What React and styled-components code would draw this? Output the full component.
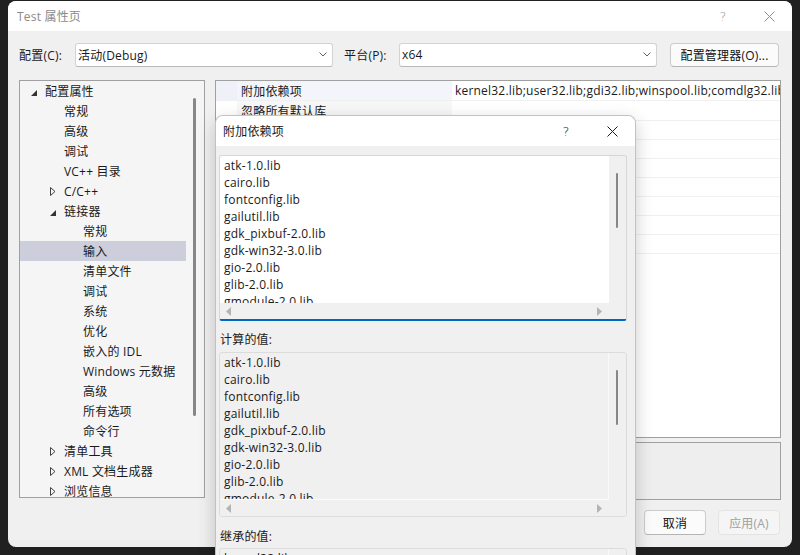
import React from "react";
import styled, { createGlobalStyle } from "styled-components";

const GlobalStyle = createGlobalStyle`
  html, body { margin: 0; padding: 0; background: #202020; }
  body {
    font-family: "Open Sans", "Noto Sans CJK SC", sans-serif;
    font-size: 12px;
    letter-spacing: 0.2px;
    color: #1a1a1a;
  }
  * { box-sizing: border-box; }
`;

const Desktop = styled.div`
  position: relative;
  width: 800px;
  height: 555px;
  overflow: hidden;
  padding: 1px 8px 0 8px;
`;

const Window = styled.div`
  width: 784px;
  height: 546px;
  background: #f0f0f0;
  border-radius: 8px;
  overflow: hidden;
  display: flex;
  flex-direction: column;
`;

const TitleBar = styled.div`
  flex: none;
  height: ${(p) => p.$h || 30}px;
  background: #ffffff;
  display: flex;
  align-items: center;
  padding-left: ${(p) => p.$pad || 9}px;
`;

const TitleText = styled.div`
  flex: 1;
  font-size: 12px;
  color: ${(p) => (p.$inactive ? "#8a8a8a" : "#1a1a1a")};
`;

const CaptionButton = styled.div`
  width: 46px;
  height: 100%;
  display: flex;
  align-items: center;
  justify-content: center;
  color: ${(p) => (p.$inactive ? "#9a9a9a" : "#1a1a1a")};
  font-size: 13px;
  font-family: "DejaVu Sans", sans-serif;
  font-weight: 300;
`;

const Body = styled.div`
  flex: 1;
  display: flex;
  flex-direction: column;
  padding: 11px 11px 12px 11px;
`;

const Toolbar = styled.div`
  display: flex;
  align-items: center;
  height: 25px;
`;

const FieldLabel = styled.div`
  width: ${(p) => p.$w}px;
  margin-left: ${(p) => p.$ml || 0}px;
  white-space: nowrap;
`;

const Combo = styled.div`
  width: 258px;
  height: 24px;
  background: #ffffff;
  border: 1px solid #d3d3d3;
  border-bottom-color: #b8b8b8;
  border-radius: 3px;
  display: flex;
  align-items: center;
  padding: 0 5px 0 2px;
`;

const ComboText = styled.div`
  flex: 1;
`;

const PushButton = styled.div`
  width: ${(p) => p.$w || 62}px;
  height: ${(p) => p.$h || 25}px;
  margin-left: ${(p) => (p.$auto ? "auto" : "0")};
  margin-right: ${(p) => p.$mr || 0}px;
  border: 1px solid ${(p) => (p.$disabled ? "#e3e3e3" : "#cccccc")};
  border-bottom-color: ${(p) => (p.$disabled ? "#e3e3e3" : "#b5b5b5")};
  border-radius: 4px;
  background: ${(p) => (p.$disabled ? "#f5f5f5" : "#fbfbfb")};
  color: ${(p) => (p.$disabled ? "#a0a0a0" : "#111")};
  display: flex;
  align-items: center;
  justify-content: center;
  white-space: nowrap;
`;

const MainArea = styled.div`
  display: grid;
  grid-template-columns: 186px minmax(0, 1fr);
  column-gap: 10px;
  margin-top: 13px;
  height: 420px;
`;

const Tree = styled.div`
  height: 418px;
  border: 1px solid #a0a0a0;
  background: #f5f5f5;
  display: flex;
`;

const TreeList = styled.div`
  flex: 1;
  overflow: hidden;
`;

const TreeRow = styled.div`
  height: 20px;
  display: flex;
  align-items: center;
  padding-left: ${(p) => 11 + p.$level * 19}px;
  background: ${(p) => (p.$selected ? "#cccedb" : "transparent")};
  white-space: nowrap;
`;

const Toggle = styled.div`
  width: 14px;
  flex: none;
  display: flex;
  align-items: center;
  margin-top: ${(p) => (p.$open ? 4 : 0)}px;
`;

const TreeScroll = styled.div`
  width: 18px;
  flex: none;
  padding: 17px 0 0 7px;
`;

const Thumb = styled.div`
  width: ${(p) => p.$w || 3}px;
  height: ${(p) => p.$h}px;
  background: #878787;
  border-radius: 2px;
`;

const RightColumn = styled.div`
  min-width: 0;
  display: flex;
  flex-direction: column;
  gap: 4px;
`;

const PropGrid = styled.div`
  height: 358px;
  border: 1px solid #a0a0a0;
  background: #ffffff;
  overflow: hidden;
`;

const PropRow = styled.div`
  display: grid;
  grid-template-columns: 21px 215px minmax(0, 1fr);
  height: 19px;
  border-bottom: 1px solid #f0f0f0;
  &:nth-child(-n + 2) {
    height: 20px;
  }
`;

const PropMargin = styled.div`
  background: ${(p) => (p.$active ? "#eef2f8" : "#ffffff")};
`;

const PropName = styled.div`
  padding-left: 4px;
  display: flex;
  align-items: center;
  background: ${(p) => (p.$active ? "#f2f5fa" : "#f7f7f7")};
  white-space: nowrap;
  overflow: hidden;
`;

const PropValue = styled.div`
  padding-left: 3px;
  display: flex;
  align-items: center;
  white-space: nowrap;
  overflow: hidden;
`;

const Description = styled.div`
  height: 58px;
  border: 1px solid #a0a0a0;
  background: #eeeeee;
`;

const Footer = styled.div`
  display: flex;
  justify-content: flex-end;
  gap: 12px;
  margin-top: 10px;
  padding-right: 1px;
`;

/* Child dialog floating over the property page */
const Dialog = styled.div`
  position: absolute;
  left: 215px;
  top: 115px;
  width: 421px;
  height: 460px;
  background: #f0f0f0;
  border: 1px solid #c2c2c2;
  border-bottom: none;
  border-radius: 8px 8px 0 0;
  box-shadow: 0 6px 18px rgba(0, 0, 0, 0.2);
  overflow: hidden;
  display: flex;
  flex-direction: column;
`;

const DialogBody = styled.div`
  padding: 9px 8px 0 3px;
  display: flex;
  flex-direction: column;
`;

const SectionLabel = styled.div`
  line-height: 17px;
  margin: ${(p) => p.$mt}px 0 ${(p) => p.$mb}px 1px;
`;

const EditBox = styled.div`
  flex: none;
  height: ${(p) => p.$h}px;
  background: ${(p) => (p.$readOnly ? "#f0f0f0" : "#ffffff")};
  border: 1px solid ${(p) => (p.$readOnly ? "#dcdcdc" : "#d6d6d6")};
  border-bottom: ${(p) => (p.$focused ? "2px solid #0067c0" : "1px solid #dcdcdc")};
  border-radius: 3px;
  display: grid;
  grid-template-columns: minmax(0, 1fr) 17px;
  grid-template-rows: minmax(0, 1fr) 16px;
  overflow: hidden;
`;

const EditText = styled.div`
  padding: 1px 4px;
  line-height: 17px;
  overflow: hidden;
  white-space: nowrap;
  border-right: ${(p) => (p.$readOnly ? "1px solid #fafafa" : "none")};
  border-bottom: ${(p) => (p.$readOnly ? "1px solid #fafafa" : "none")};
`;

const VScroll = styled.div`
  background: #f0f0f0;
  padding: 17px 0 0 7px;
`;

const HScroll = styled.div`
  grid-column: 1 / -1;
  background: #f0f0f0;
  display: flex;
  align-items: center;
  justify-content: space-between;
  padding: 0 24px 0 6px;
`;

const Chevron = () => (
  <svg width="8" height="5" viewBox="0 0 8 5">
    <path d="M0.5 0.5 L4 4 L7.5 0.5" stroke="#5f5f5f" strokeWidth="1" fill="none" />
  </svg>
);

const CloseGlyph = ({ color }) => (
  <svg width="11" height="11" viewBox="0 0 11 11">
    <path d="M0.5 0.5 L10.5 10.5 M10.5 0.5 L0.5 10.5" stroke={color} strokeWidth="1" />
  </svg>
);

const OpenArrow = () => (
  <svg width="6" height="6" viewBox="0 0 6 6">
    <polygon points="6,0 6,6 0,6" fill="#333333" />
  </svg>
);

const ClosedArrow = () => (
  <svg width="6" height="9" viewBox="0 0 6 9">
    <path d="M0.5 0.5 L5 4.5 L0.5 8.5 Z" fill="none" stroke="#404040" strokeWidth="1" />
  </svg>
);

const ScrollArrow = ({ dir }) => (
  <svg width="5" height="9" viewBox="0 0 5 9">
    {dir === "left" ? (
      <polygon points="5,0 5,9 0,4.5" fill="#b3b3b3" />
    ) : (
      <polygon points="0,0 0,9 5,4.5" fill="#b3b3b3" />
    )}
  </svg>
);

const treeItems = [
  { level: 0, label: "配置属性", toggle: "open" },
  { level: 1, label: "常规" },
  { level: 1, label: "高级" },
  { level: 1, label: "调试" },
  { level: 1, label: "VC++ 目录" },
  { level: 1, label: "C/C++", toggle: "closed" },
  { level: 1, label: "链接器", toggle: "open" },
  { level: 2, label: "常规" },
  { level: 2, label: "输入", selected: true },
  { level: 2, label: "清单文件" },
  { level: 2, label: "调试" },
  { level: 2, label: "系统" },
  { level: 2, label: "优化" },
  { level: 2, label: "嵌入的 IDL" },
  { level: 2, label: "Windows 元数据" },
  { level: 2, label: "高级" },
  { level: 2, label: "所有选项" },
  { level: 2, label: "命令行" },
  { level: 1, label: "清单工具", toggle: "closed" },
  { level: 1, label: "XML 文档生成器", toggle: "closed" },
  { level: 1, label: "浏览信息", toggle: "closed" },
];

const properties = [
  {
    name: "附加依赖项",
    value:
      "kernel32.lib;user32.lib;gdi32.lib;winspool.lib;comdlg32.lib;advapi32.lib;shell32.lib;ole32.lib;oleaut32.lib;uuid.lib;odbc32.lib;odbccp32.lib;%(AdditionalDependencies)",
    active: true,
  },
  { name: "忽略所有默认库", value: "" },
  { name: "忽略特定默认库", value: "" },
  { name: "模块定义文件", value: "" },
  { name: "将模块添加到程序集", value: "" },
  { name: "嵌入托管资源文件", value: "" },
  { name: "强制符号引用", value: "" },
  { name: "延迟加载的 DLL", value: "" },
  { name: "程序集链接资源", value: "" },
];

const libs = [
  "atk-1.0.lib",
  "cairo.lib",
  "fontconfig.lib",
  "gailutil.lib",
  "gdk_pixbuf-2.0.lib",
  "gdk-win32-3.0.lib",
  "gio-2.0.lib",
  "glib-2.0.lib",
  "gmodule-2.0.lib",
  "gobject-2.0.lib",
  "gtk-win32-3.0.lib",
  "pango-1.0.lib",
  "pangocairo-1.0.lib",
];

const inherited = [
  "kernel32.lib",
  "user32.lib",
  "gdi32.lib",
  "winspool.lib",
  "comdlg32.lib",
  "advapi32.lib",
];

const LineList = ({ items, readOnly }) => (
  <EditText $readOnly={readOnly}>
    {items.map((t, i) => (
      <div key={i}>{t}</div>
    ))}
  </EditText>
);

const ListEditor = ({ items, h, focused, readOnly }) => (
  <EditBox $h={h} $focused={focused} $readOnly={readOnly}>
    <LineList items={items} readOnly={readOnly} />
    <VScroll>
      <Thumb $w={2} $h={55} />
    </VScroll>
    <HScroll>
      <ScrollArrow dir="left" />
      <ScrollArrow dir="right" />
    </HScroll>
  </EditBox>
);

export default function App() {
  return (
    <>
      <GlobalStyle />
      <Desktop>
        <Window>
          <TitleBar>
            <TitleText $inactive>Test 属性页</TitleText>
            <CaptionButton $inactive>?</CaptionButton>
            <CaptionButton $inactive>
              <CloseGlyph color="#8f8f8f" />
            </CaptionButton>
          </TitleBar>
          <Body>
            <Toolbar>
              <FieldLabel $w={56}>配置(C):</FieldLabel>
              <Combo>
                <ComboText>活动(Debug)</ComboText>
                <Chevron />
              </Combo>
              <FieldLabel $w={55} $ml={11}>
                平台(P):
              </FieldLabel>
              <Combo>
                <ComboText>x64</ComboText>
                <Chevron />
              </Combo>
              <PushButton $w={109} $h={24} $auto $mr={2}>
                配置管理器(O)...
              </PushButton>
            </Toolbar>

            <MainArea>
              <Tree>
                <TreeList>
                  {treeItems.map((it, i) => (
                    <TreeRow key={i} $level={it.level} $selected={it.selected}>
                      <Toggle $open={it.toggle === "open"}>
                        {it.toggle === "open" && <OpenArrow />}
                        {it.toggle === "closed" && <ClosedArrow />}
                      </Toggle>
                      {it.label}
                    </TreeRow>
                  ))}
                </TreeList>
                <TreeScroll>
                  <Thumb $h={318} />
                </TreeScroll>
              </Tree>

              <RightColumn>
                <PropGrid>
                  {properties.map((p, i) => (
                    <PropRow key={i}>
                      <PropMargin $active={p.active} />
                      <PropName $active={p.active}>{p.name}</PropName>
                      <PropValue>{p.value}</PropValue>
                    </PropRow>
                  ))}
                </PropGrid>
                <Description />
              </RightColumn>
            </MainArea>

            <Footer>
              <PushButton>确定</PushButton>
              <PushButton>取消</PushButton>
              <PushButton $disabled>应用(A)</PushButton>
            </Footer>
          </Body>
        </Window>

        <Dialog>
          <TitleBar $h={30} $pad={7}>
            <TitleText>附加依赖项</TitleText>
            <CaptionButton>?</CaptionButton>
            <CaptionButton>
              <CloseGlyph color="#1a1a1a" />
            </CaptionButton>
          </TitleBar>
          <DialogBody>
            <ListEditor items={libs} h={166} focused />
            <SectionLabel $mt={10} $mb={4}>计算的值:</SectionLabel>
            <ListEditor items={libs} h={165} readOnly />
            <SectionLabel $mt={11} $mb={3}>继承的值:</SectionLabel>
            <ListEditor items={inherited} h={120} readOnly />
          </DialogBody>
        </Dialog>
      </Desktop>
    </>
  );
}
